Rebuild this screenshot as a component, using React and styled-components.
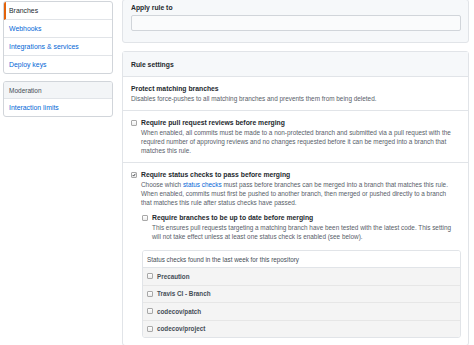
import styled, { createGlobalStyle } from "styled-components";

const GlobalStyle = createGlobalStyle`
    body {
        margin: 0;
        background: #fff;
        color: #24292e;
        font-family: "Liberation Sans", Helvetica, Arial, sans-serif;
        overflow: hidden;
    }
`;

function Checkbox({ checked }) {
    return (
        <CheckBox>
            {checked && (
                <svg width="6" height="6" viewBox="0 0 6 6">
                    <path d="M1 3.1 L2.5 4.6 L5 1.2" fill="none" stroke="#24292e" strokeWidth="1.2" />
                </svg>
            )}
        </CheckBox>
    );
}

function App() {
    const menu = ["Webhooks", "Integrations & services", "Deploy keys"];
    const checks = ["Precaution", "Travis CI - Branch", "codecov/patch", "codecov/project"];

    return (
        <Page>
            <GlobalStyle />
            <Sidebar>
                <Menu $first>
                    <MenuItem $selected>Branches</MenuItem>
                    {menu.map((m) => (
                        <MenuItem key={m}>{m}</MenuItem>
                    ))}
                </Menu>
                <Menu>
                    <MenuHeader>Moderation</MenuHeader>
                    <MenuItem>Interaction limits</MenuItem>
                </Menu>
            </Sidebar>

            <Main>
                <ApplyBox>
                    <Label>Apply rule to</Label>
                    <Input />
                </ApplyBox>

                <Box>
                    <BoxHeader>Rule settings</BoxHeader>

                    <Section>
                        <Title>Protect matching branches</Title>
                        <Note>Disables force-pushes to all matching branches and prevents them from being deleted.</Note>
                    </Section>

                    <Section>
                        <Option>
                            <Checkbox />
                            <div>
                                <Title>Require pull request reviews before merging</Title>
                                <Note>
                                    When enabled, all commits must be made to a non-protected branch and submitted via a pull request with the
                                    <br />
                                    required number of approving reviews and no changes requested before it can be merged into a branch that
                                    <br />
                                    matches this rule.
                                </Note>
                            </div>
                        </Option>
                    </Section>

                    <Section $last>
                        <Option>
                            <Checkbox checked />
                            <OptionBody>
                                <Title>Require status checks to pass before merging</Title>
                                <Note>
                                    Choose which <Link>status checks</Link> must pass before branches can be merged into a branch that matches this rule.
                                    <br />
                                    When enabled, commits must first be pushed to another branch, then merged or pushed directly to a branch
                                    <br />
                                    that matches this rule after status checks have passed.
                                </Note>

                                <SubOption>
                                    <Checkbox />
                                    <div>
                                        <Title>Require branches to be up to date before merging</Title>
                                        <Note>
                                            This ensures pull requests targeting a matching branch have been tested with the latest code. This setting
                                            <br />
                                            will not take effect unless at least one status check is enabled (see below).
                                        </Note>
                                    </div>
                                </SubOption>

                                <ChecksTable>
                                    <TableHeader>Status checks found in the last week for this repository</TableHeader>
                                    {checks.map((c) => (
                                        <CheckRow key={c}>
                                            <Checkbox />
                                            <span>{c}</span>
                                        </CheckRow>
                                    ))}
                                </ChecksTable>
                            </OptionBody>
                        </Option>
                    </Section>
                </Box>
            </Main>
        </Page>
    );
}

const Page = styled.div`
    display: flex;
    align-items: flex-start;
    gap: 9px;
    padding: 0 5px 0 3px;
    margin-top: -1px;
`;

const Sidebar = styled.div`
    width: 110px;
    flex-shrink: 0;
    display: flex;
    flex-direction: column;
    gap: 7px;
`;

const Menu = styled.div`
    border: 1px solid #d1d5da;
    border-radius: 3px;
    background: #fff;
    margin-top: ${(p) => (p.$first ? "2px" : "0")};
    overflow: hidden;
`;

const MenuItem = styled.div`
    height: 17px;
    display: flex;
    align-items: center;
    padding-left: ${(p) => (p.$selected ? "3px" : "5px")};
    border-left: ${(p) => (p.$selected ? "2px solid #e36209" : "none")};
    border-bottom: 1px solid #e1e4e8;
    font-size: 6.9px;
    color: ${(p) => (p.$selected ? "#24292e" : "#0366d6")};

    &:last-child {
        border-bottom: none;
    }
`;

const MenuHeader = styled.div`
    height: 16px;
    display: flex;
    align-items: center;
    padding-left: 5px;
    background: #f3f5f7;
    border-bottom: 1px solid #e1e4e8;
    font-size: 6.5px;
    color: #444d56;
`;

const Main = styled.div`
    flex: 1;
    display: flex;
    flex-direction: column;
    gap: 8px;
`;

const ApplyBox = styled.div`
    background: #f6f8fa;
    border: 1px solid #e1e4e8;
    border-radius: 3px;
    padding: 3px 7px 11px 8px;
`;

const Label = styled.div`
    font-size: 6.8px;
    font-weight: 700;
    line-height: 9px;
`;

const Input = styled.div`
    height: 14px;
    margin-top: 3px;
    background: #fafbfc;
    border: 1px solid #d1d5da;
    border-radius: 2px;
`;

const Box = styled.div`
    border: 1px solid #e1e4e8;
    border-radius: 3px;
    background: #fff;
`;

const BoxHeader = styled.div`
    height: 24px;
    display: flex;
    align-items: center;
    padding-left: 8px;
    background: #f6f8fa;
    border-bottom: 1px solid #e1e4e8;
    font-size: 6.8px;
    font-weight: 700;
`;

const Section = styled.div`
    padding: 7px 7px ${(p) => (p.$last ? "7px" : "7px")} 8px;
    border-bottom: ${(p) => (p.$last ? "none" : "1px solid #e1e4e8")};
`;

const Title = styled.div`
    font-size: 6.8px;
    font-weight: 700;
    line-height: 10px;
    white-space: nowrap;
`;

const Note = styled.div`
    font-size: 6.4px;
    line-height: 9px;
    color: #586069;
    white-space: nowrap;
`;

const Link = styled.span`
    color: #0366d6;
`;

const Option = styled.div`
    display: flex;
    align-items: flex-start;
    gap: 4px;
`;

const OptionBody = styled.div`
    flex: 1;
`;

const SubOption = styled(Option)`
    margin-top: 6px;
    padding-left: 1px;
`;

const CheckBox = styled.span`
    flex-shrink: 0;
    box-sizing: border-box;
    width: 6px;
    height: 6px;
    margin-top: 2px;
    border: 1px solid #a8a8a8;
    border-radius: 1px;
    background: linear-gradient(#fff, #ececec);
    display: flex;
    align-items: center;
    justify-content: center;
`;

const ChecksTable = styled.div`
    margin: 9px 0 0 1px;
    border: 1px solid #e1e4e8;
    border-radius: 3px;
    overflow: hidden;
`;

const TableHeader = styled.div`
    height: 16px;
    display: flex;
    align-items: center;
    padding-left: 4px;
    background: #fff;
    border-bottom: 1px solid #e1e4e8;
    font-size: 6.3px;
    color: #444d56;
`;

const CheckRow = styled.div`
    height: 16.5px;
    display: flex;
    align-items: center;
    gap: 4px;
    padding-left: 4px;
    background: #f4f4f4;
    border-bottom: 1px solid #e6e6e6;
    font-size: 6.3px;
    font-weight: 700;
    color: #444d56;

    &:last-child {
        border-bottom: none;
    }

    & > span:first-child {
        margin-top: 0;
    }
`;

export default App;
